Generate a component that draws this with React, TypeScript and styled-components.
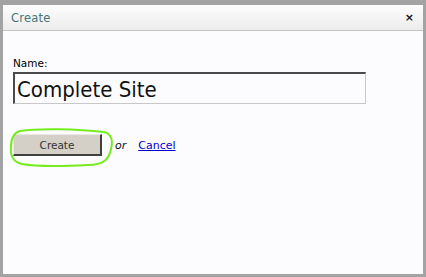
import React from "react";
import styled, { createGlobalStyle } from "styled-components";

const Global = createGlobalStyle`
  html, body { margin: 0; padding: 0; background: #a3a3a3; }
  body { font-family: "DejaVu Sans", Verdana, sans-serif; }
  #root { width: 426px; height: 277px; padding: 5px 3px 3px 3px; box-sizing: border-box; }
`;

const Dialog = styled.div`
  height: 269px;
  background: #fcfcff;
  display: flex;
  flex-direction: column;
  position: relative;
`;

const TitleBar = styled.div`
  height: 25px;
  border-bottom: 1px solid #c4c4c4;
  background: linear-gradient(#fdfdfd, #ececec);
  display: flex;
  align-items: center;
  justify-content: space-between;
  padding: 0 9px 0 8px;
`;

const Title = styled.span`
  font-size: 11.5px;
  color: #467575;
  letter-spacing: 0.2px;
`;

const Close = styled.span`
  font-size: 11px;
  font-weight: bold;
  color: #111;
  line-height: 1;
`;

const Body = styled.div`
  padding: 24px 10px 0 10px;
  display: flex;
  flex-direction: column;
`;

const Label = styled.label`
  font-size: 10.5px;
  color: #000;
  height: 16px;
  line-height: 16px;
  margin-bottom: 1px;
`;

const Input = styled.input`
  width: 353px;
  height: 32px;
  box-sizing: border-box;
  border-style: solid;
  border-width: 2px 1px 1px 2px;
  border-color: #4a4a4a #c8c8c8 #c8c8c8 #4a4a4a;
  background: #fcfcff;
  font-family: "DejaVu Sans Condensed", "DejaVu Sans", sans-serif;
  font-size: 22px;
  color: #111;
  padding: 1px 2px 0 2px;
  outline: none;
`;

const Actions = styled.div`
  margin-top: 30px;
  display: flex;
  align-items: center;
  font-size: 11px;
`;

const ButtonWrap = styled.div`
  position: relative;
  display: flex;
`;

const Button = styled.button`
  width: 89px;
  height: 22px;
  box-sizing: border-box;
  background: #d4d0c8;
  border-style: solid;
  border-width: 1px 2px 2px 1px;
  border-color: #ece9e4 #404040 #404040 #ece9e4;
  font-family: "DejaVu Sans", sans-serif;
  font-size: 10.5px;
  color: #333;
  padding: 0;
`;

const Scribble = styled.svg`
  position: absolute;
  left: -5px;
  top: -7px;
  pointer-events: none;
`;

const Or = styled.span`
  font-style: italic;
  font-size: 11px;
  color: #111;
  margin-left: 13px;
`;

const CancelLink = styled.a`
  color: #0000cc;
  text-decoration: underline;
  font-size: 11px;
  margin-left: 12px;
  cursor: pointer;
`;

export default function App() {
  return (
    <>
      <Global />
      <Dialog>
        <TitleBar>
          <Title>Create</Title>
          <Close>×</Close>
        </TitleBar>
        <Body>
          <Label>Name:</Label>
          <Input defaultValue="Complete Site" />
          <Actions>
            <ButtonWrap>
              <Button>Create</Button>
              <Scribble width="106" height="42" viewBox="0 0 106 42">
                <path
                  d="M12 4 C30 1 70 2 96 5 C104 7 105 14 103 22 C101 32 96 38 80 38 C60 39 30 40 14 37 C5 35 2 28 3 20 C3 12 5 6 12 4 Z"
                  fill="none"
                  stroke="#74ec1e"
                  strokeWidth="2"
                />
              </Scribble>
            </ButtonWrap>
            <Or>or</Or>
            <CancelLink>Cancel</CancelLink>
          </Actions>
        </Body>
      </Dialog>
    </>
  );
}
